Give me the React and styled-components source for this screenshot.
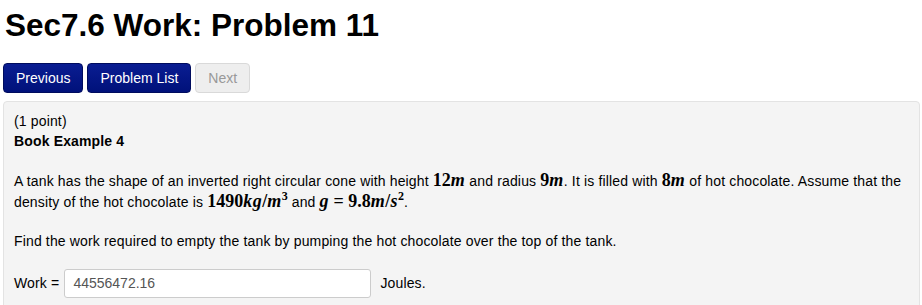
import React from 'react'
import styled, { createGlobalStyle } from 'styled-components'

const GlobalStyle = createGlobalStyle`
  body {
    margin: 0;
    background: #ffffff;
    font-family: "Liberation Sans", Arial, sans-serif;
    color: #000;
  }
`

const Page = styled.div`
  padding: 0 2px 0 3px;
`

const Title = styled.h1`
  margin: 0;
  padding: 4px 0 0 2px;
  font-size: 31.5px;
  line-height: 42px;
  font-weight: bold;
`

const NavBar = styled.div`
  display: flex;
  gap: 4px;
  margin-top: 17px;
`

const NavButton = styled.button`
  height: 30px;
  padding: 0 12px;
  font-family: "Liberation Sans", Arial, sans-serif;
  font-size: 14px;
  border-radius: 4px;
  border: 1px solid ${p => (p.disabled ? '#d9d9d9' : '#000c5e')};
  background: ${p => (p.disabled ? '#eeeeee' : 'linear-gradient(#0a1d92, #00117a)')};
  color: ${p => (p.disabled ? '#999999' : '#ffffff')};
  cursor: ${p => (p.disabled ? 'default' : 'pointer')};
`

const Panel = styled.div`
  margin-top: 8px;
  background: #f4f4f4;
  border: 1px solid #e3e3e3;
  border-radius: 4px;
  padding: 9px 10px 20px 10px;
  font-size: 14px;
  line-height: 20px;
  letter-spacing: 0.15px;
`

const Line = styled.div``

const Bold = styled.div`
  font-weight: bold;
`

const Para = styled.p`
  margin: 20px 0 0 0;
  line-height: 19.5px;
`

const M = styled.span`
  font-family: "Liberation Serif", "DejaVu Serif", serif;
  font-weight: bold;
  font-size: 18px;
  letter-spacing: 0;
  i {
    font-style: italic;
    letter-spacing: 0.5px;
  }
  sup {
    font-size: 12px;
    line-height: 0;
    vertical-align: 0;
    position: relative;
    top: -7px;
  }
`

const AnswerRow = styled.div`
  display: flex;
  align-items: center;
  margin-top: 17px;
`

const AnswerInput = styled.input`
  width: 307px;
  height: 29px;
  box-sizing: border-box;
  margin: 0 9px 0 5px;
  padding: 0 8px;
  border: 1px solid #cccccc;
  border-radius: 3px;
  background: #fff;
  font-family: "Liberation Sans", Arial, sans-serif;
  font-size: 14px;
  color: #555;
`

const App = () => {
  return (
    <Page>
      <GlobalStyle />
      <Title>Sec7.6 Work: Problem 11</Title>
      <NavBar>
        <NavButton>Previous</NavButton>
        <NavButton>Problem List</NavButton>
        <NavButton disabled>Next</NavButton>
      </NavBar>
      <Panel>
        <Line>(1 point)</Line>
        <Bold>Book Example 4</Bold>
        <Para>
          A tank has the shape of an inverted right circular cone with height <M>12<i>m</i></M> and
          radius <M>9<i>m</i></M>. It is filled with <M>8<i>m</i></M> of hot chocolate. Assume that the
          density of the hot chocolate is <M>1490<i>kg</i>/<i>m</i><sup>3</sup></M> and{' '}
          <M><i>g</i> = 9.8<i>m</i>/<i>s</i><sup>2</sup></M>.
        </Para>
        <Para>Find the work required to empty the tank by pumping the hot chocolate over the top of the tank.</Para>
        <AnswerRow>
          Work =
          <AnswerInput defaultValue="44556472.16" />
          Joules.
        </AnswerRow>
      </Panel>
    </Page>
  )
}

export default App
